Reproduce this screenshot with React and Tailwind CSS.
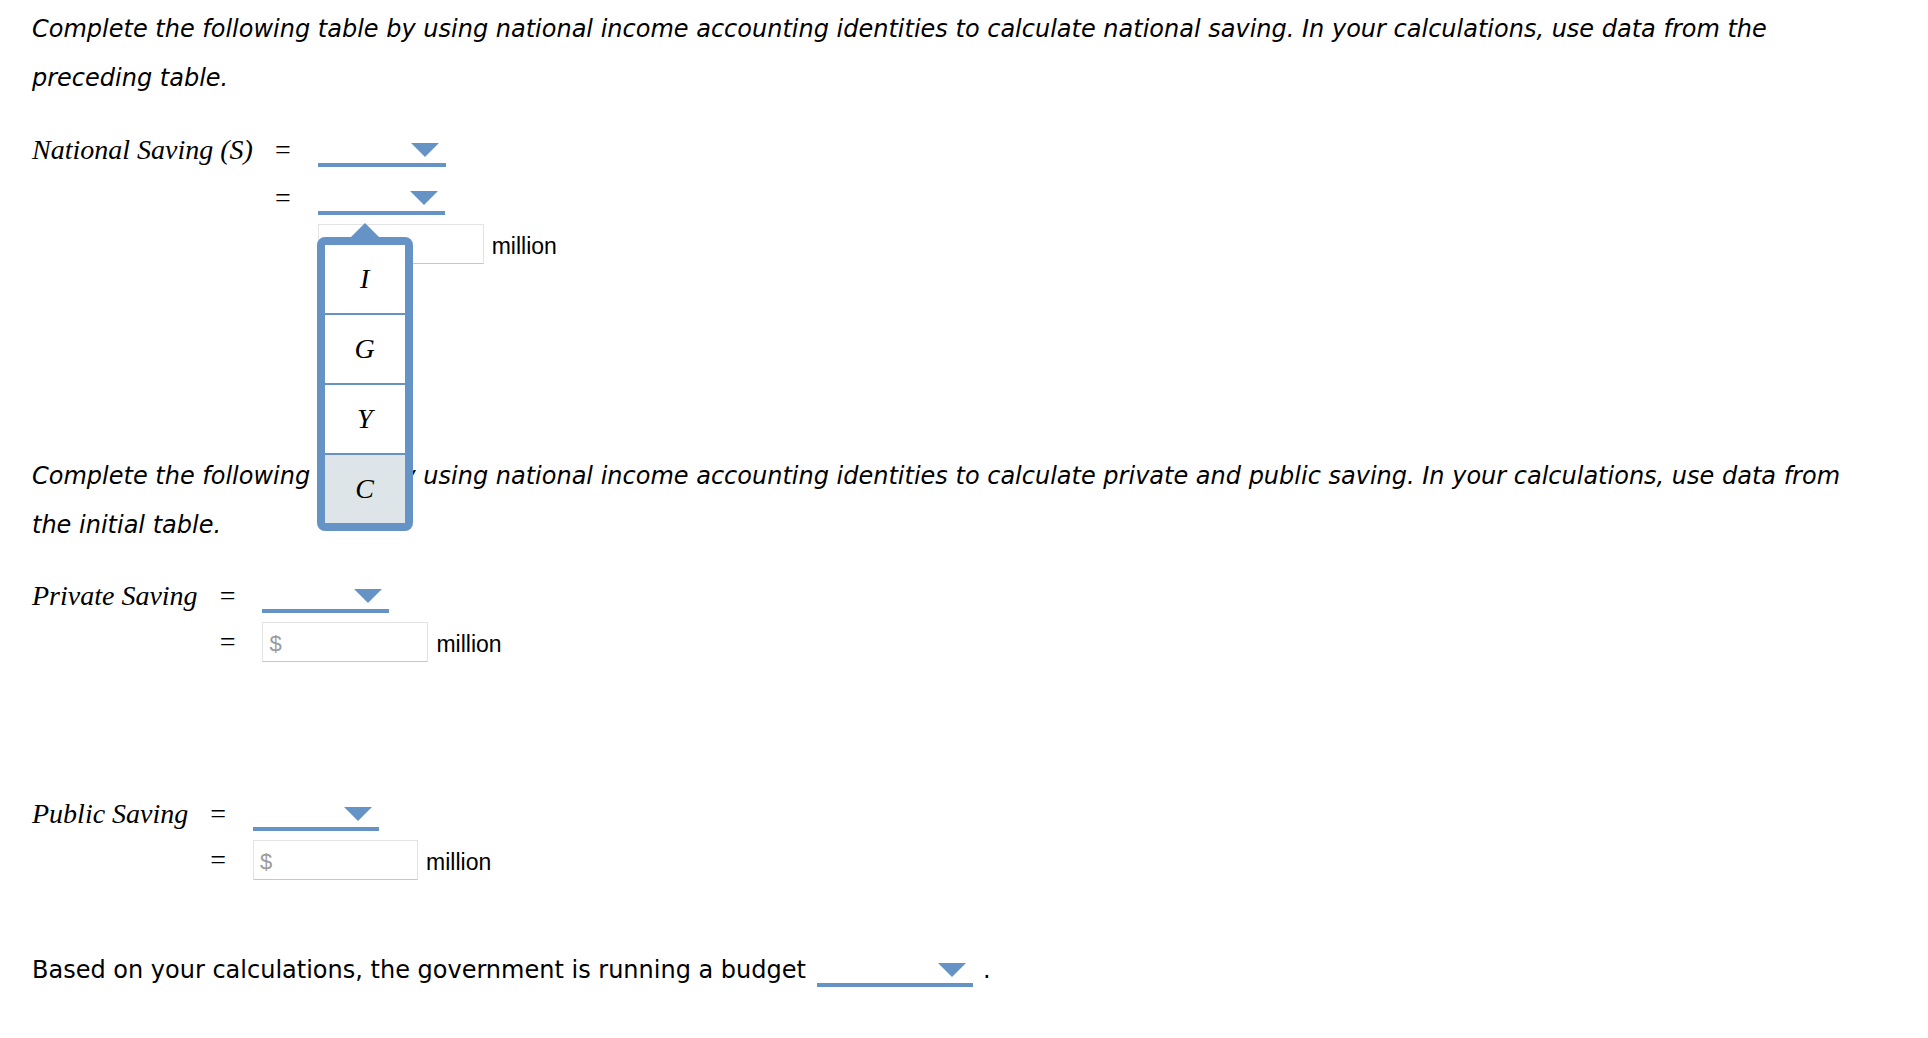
import React from "react";

const BLUE = "#6593c5";

function Tri() {
  return (
    <svg width="28" height="14" viewBox="0 0 28 14" className="block">
      <polygon points="0,0 28,0 14,14" fill={BLUE} />
    </svg>
  );
}

function Dropdown({ className }) {
  return (
    <div className={"h-[34px] border-b-4 border-[#6593c5] flex justify-end items-start pt-[10px] pr-[7px] " + className}>
      <Tri />
    </div>
  );
}

function DollarInput({ className, children }) {
  return (
    <div className={"relative h-[40px] border border-[#e3e3e3] border-b-[#c6c6c6] bg-white flex items-center pl-[6px] " + className}>
      <span className="font-['Liberation_Sans',Arial,sans-serif] text-[22px] text-[#9b9b9b] leading-none mt-[3px]">$</span>
      {children}
    </div>
  );
}

function Million() {
  return (
    <span className="ml-[8px] mt-[4px] font-['Liberation_Sans',Arial,sans-serif] text-[23px] leading-none">million</span>
  );
}

const label = "font-['Liberation_Serif','Times_New_Roman',serif] italic text-[28px] leading-none whitespace-nowrap";
const eq = "font-['Liberation_Serif','Times_New_Roman',serif] text-[28px] leading-none pl-[22px] pr-[27px]";
const para = "font-['DejaVu_Sans',Verdana,sans-serif] italic text-[24px] leading-[49px] whitespace-nowrap";

function Popup() {
  const items = ["I", "G", "Y", "C"];
  return (
    <div className="absolute left-[-1px] top-[-1px] z-10 flex flex-col items-center">
      <svg width="28" height="14" viewBox="0 0 28 14" className="block">
        <polygon points="0,14 14,0 28,14" fill={BLUE} />
      </svg>
      <div className="w-[96px] h-[294px] border-8 border-[#6593c5] rounded-[8px] bg-white flex flex-col overflow-hidden">
        {items.map((it, i) => (
          <div
            key={it}
            className={
              "h-[68px] shrink-0 flex items-center justify-center font-['Liberation_Serif','Times_New_Roman',serif] italic text-[28px] " +
              (i > 0 ? "border-t-2 border-[#6593c5] h-[70px] " : "") +
              (it === "C" ? "bg-[#dee5e8]" : "bg-white")
            }
          >
            {it}
          </div>
        ))}
      </div>
    </div>
  );
}

export default function App() {
  return (
    <div className="w-[1928px] min-h-[1038px] bg-white text-black">
      <div className="pl-[32px] pt-[5px]">
        <p className={para}>
          Complete the following table by using national income accounting identities to calculate national saving. In your calculations, use data from the
          <br />
          preceding table.
        </p>

        <div className="mt-[23px] grid grid-cols-[auto_auto_auto] grid-rows-[48px_48px_44px] items-center w-max">
          <div className={label}>National Saving (S)</div>
          <div className={eq}>=</div>
          <Dropdown className="w-[128px]" />

          <div />
          <div className={eq}>=</div>
          <Dropdown className="w-[127px]" />

          <div />
          <div />
          <div className="flex items-center">
            <div className="relative">
              <DollarInput className="w-[166px]" />
              <Popup />
            </div>
            <Million />
          </div>
        </div>

        <p className={para + " mt-[186px]"}>
          Complete the following table by using national income accounting identities to calculate private and public saving. In your calculations, use data from
          <br />
          the initial table.
        </p>

        <div className="mt-[22px] grid grid-cols-[auto_auto_auto] grid-rows-[48px_44px] items-center w-max">
          <div className={label}>Private Saving</div>
          <div className={eq}>=</div>
          <Dropdown className="w-[127px]" />

          <div />
          <div className={eq}>=</div>
          <div className="flex items-center">
            <DollarInput className="w-[166px]" />
            <Million />
          </div>
        </div>

        <div className="mt-[126px] grid grid-cols-[auto_auto_auto] grid-rows-[48px_44px] items-center w-max">
          <div className={label}>Public Saving</div>
          <div className={eq}>=</div>
          <Dropdown className="w-[126px]" />

          <div />
          <div className={eq}>=</div>
          <div className="flex items-center">
            <DollarInput className="w-[165px]" />
            <Million />
          </div>
        </div>

        <div className="mt-[63px] h-[49px] flex items-center font-['DejaVu_Sans',Verdana,sans-serif] text-[24px] whitespace-nowrap">
          <span>Based on your calculations, the government is running a budget</span>
          <Dropdown className="w-[156px] ml-[11px]" />
          <span className="ml-[10px]">.</span>
        </div>
      </div>
    </div>
  );
}
